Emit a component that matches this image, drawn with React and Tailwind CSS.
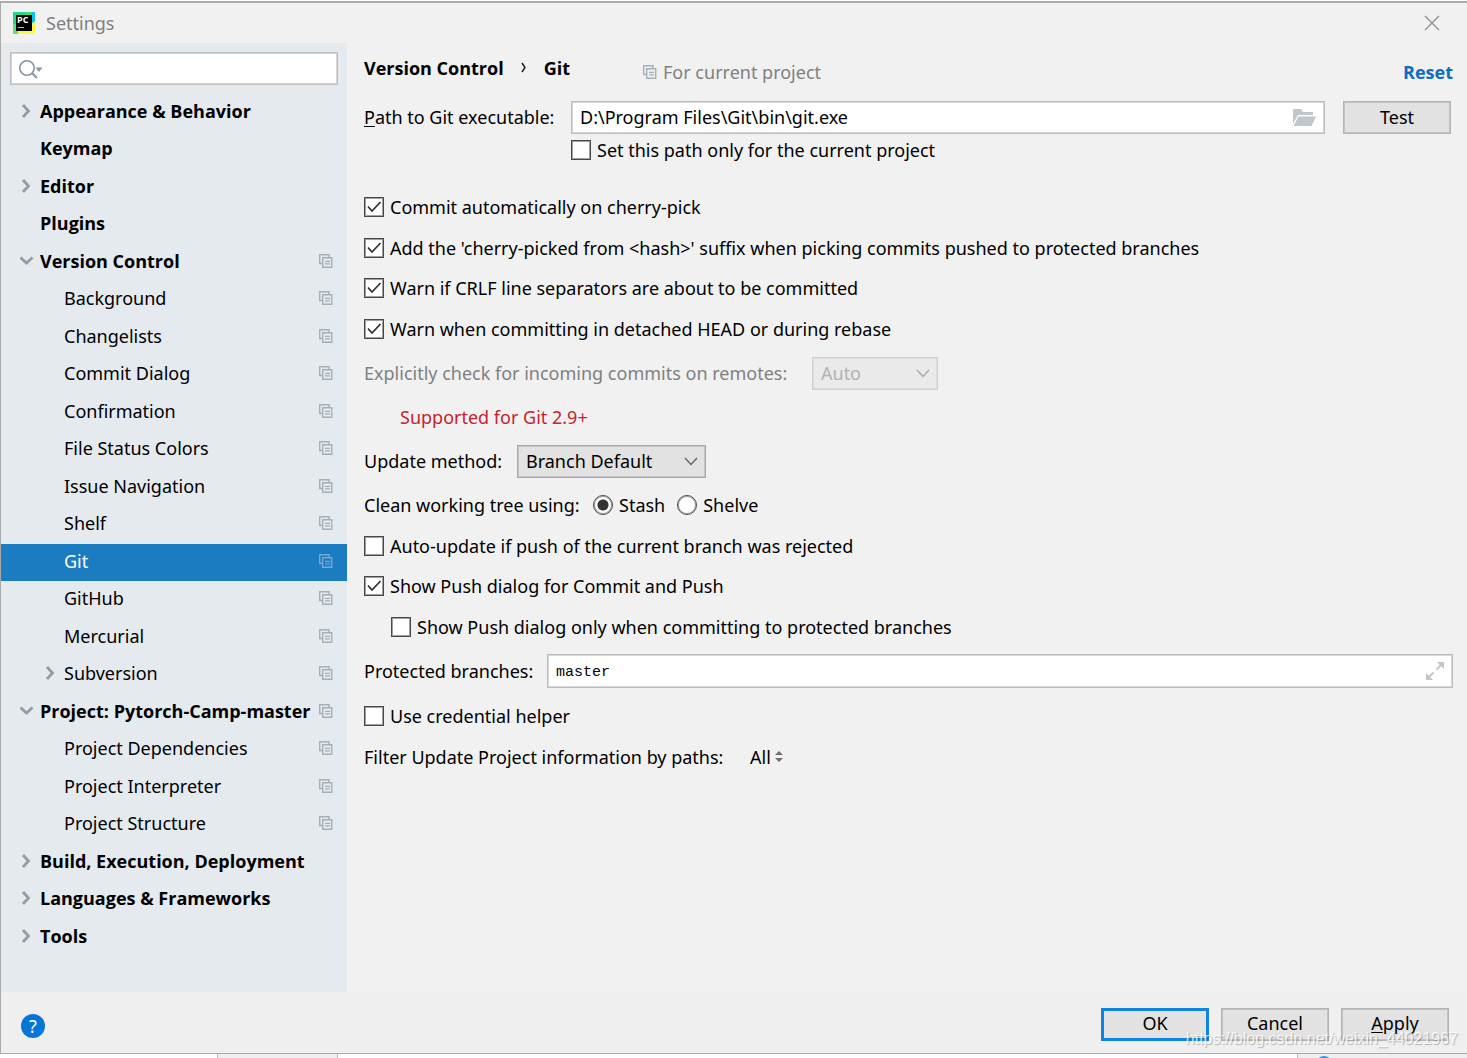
import React from "react";

const tree = [
  { label: "Appearance & Behavior", arrow: "right", top: true },
  { label: "Keymap", top: true },
  { label: "Editor", arrow: "right", top: true },
  { label: "Plugins", top: true },
  { label: "Version Control", arrow: "down", top: true, project: true },
  { label: "Background", project: true },
  { label: "Changelists", project: true },
  { label: "Commit Dialog", project: true },
  { label: "Confirmation", project: true },
  { label: "File Status Colors", project: true },
  { label: "Issue Navigation", project: true },
  { label: "Shelf", project: true },
  { label: "Git", project: true, selected: true },
  { label: "GitHub", project: true },
  { label: "Mercurial", project: true },
  { label: "Subversion", arrow: "right", project: true },
  { label: "Project: Pytorch-Camp-master", arrow: "down", top: true, project: true },
  { label: "Project Dependencies", project: true },
  { label: "Project Interpreter", project: true },
  { label: "Project Structure", project: true },
  { label: "Build, Execution, Deployment", arrow: "right", top: true },
  { label: "Languages & Frameworks", arrow: "right", top: true },
  { label: "Tools", arrow: "right", top: true },
];

function PyCharmLogo() {
  return (
    <svg width="22" height="22" viewBox="0 0 22 22" aria-hidden="true">
      <path d="M0 0h22v22H0z" fill="#21d789" />
      <path d="M17 0h5v12l-5-2z" fill="#07c3f2" />
      <path d="M12 0h7l-2 6h-5z" fill="#3fe06a" />
      <path d="M22 9v13H5l-5-3v-2l14-2z" fill="#fcf84a" />
      <path d="M0 12h5v10H0z" fill="#5be07a" />
      <path d="M3 3h16v16H3z" fill="#000" />
      <text x="4" y="11" fontSize="9" fontWeight="700" fill="#fff" fontFamily="Open Sans, sans-serif">PC</text>
      <path d="M5 15.500h6" stroke="#bbb" />
    </svg>
  );
}

function ProjectIcon({ color = "#a5b0b8" }) {
  return (
    <svg width="14" height="14" viewBox="0 0 14 14" fill="none" stroke={color} className="shrink-0" aria-hidden="true">
      <path d="M3 9.500H.7V.7H10V3" strokeWidth="1.400" />
      <path d="M3.700 3.700h9v9.600h-9z" strokeWidth="1.400" />
      <path d="M6 7.300h5M6 9.900h5" strokeWidth="1.300" />
    </svg>
  );
}

function Arrow({ dir }) {
  return (
    <svg width="14" height="14" viewBox="0 0 14 14" fill="none" stroke="#999c9f" strokeWidth="2.800" aria-hidden="true">
      {dir === "right" ? <path d="M3 1l5.500 6L3 13" /> : <path d="M.5 3.500l6 5.500 6-5.500" />}
    </svg>
  );
}

function TreeItem({ label, arrow, top, project, selected }) {
  return (
    <li className="odd:h-[37px] even:h-[38px]">
      <button
        className={`flex h-full w-full items-center pr-[14px] pb-1 text-left ${
          top ? "pl-[19px] font-['Open_Sans',sans-serif] font-bold" : "pl-[43px]"
        } ${selected ? "bg-[#1b7cc2] text-white" : ""}`}
      >
        <span className="w-5 shrink-0">{arrow && <Arrow dir={arrow} />}</span>
        <span className="flex-1 whitespace-nowrap">{label}</span>
        {project && <ProjectIcon color={selected ? "#7fa6c6" : undefined} />}
      </button>
    </li>
  );
}

function Sidebar() {
  return (
    <aside className="w-[346px] shrink-0 bg-[#e5eaee]">
      <div className="px-[9px] pt-[9px]">
        <label className="flex h-[33px] items-center border border-[#bcbec0] bg-white pl-[7px] shadow-[inset_0_0_0_1px_#d4d6d8]">
          <svg width="26" height="20" viewBox="0 0 26 20" fill="none" stroke="#8b969e" aria-hidden="true">
            <circle cx="9" cy="9" r="7.200" strokeWidth="1.600" />
            <path d="M14 14l5 5" strokeWidth="2.200" />
            <path d="M17.500 8.500h7L21 13z" fill="#8b969e" stroke="none" />
          </svg>
          <input type="text" aria-label="Search settings" className="w-full min-w-0 flex-1 bg-transparent outline-none" />
        </label>
      </div>
      <ul className="pt-[9px]">
        {tree.map((item) => (
          <TreeItem key={item.label} {...item} />
        ))}
      </ul>
    </aside>
  );
}

function Check({ label, checked }) {
  return (
    <label className="flex items-center gap-1.5">
      <span className="relative block h-5 w-5">
        <input
          type="checkbox"
          defaultChecked={checked}
          className="peer block h-5 w-5 appearance-none border border-[#484848] bg-white shadow-[inset_0_0_0_1px_#a0a0a0]"
        />
        <svg
          viewBox="0 0 20 20"
          fill="none"
          stroke="#333"
          strokeWidth="1.800"
          className="pointer-events-none absolute inset-0 hidden peer-checked:block"
          aria-hidden="true"
        >
          <path d="M4 9.500L8 14l8.500-9" />
        </svg>
      </span>
      {label}
    </label>
  );
}

function Radio({ label, checked }) {
  return (
    <label className="flex items-center gap-1.5">
      <input
        type="radio"
        name="clean"
        defaultChecked={checked}
        className="h-5 w-5 appearance-none rounded-full border border-[#484848] bg-white shadow-[inset_0_0_0_1px_#a0a0a0] checked:bg-[radial-gradient(circle,#333_5px,#fff_6px)]"
      />
      {label}
    </label>
  );
}

function Combo({ id, value, disabled, className }) {
  return (
    <span className={`relative block ${disabled ? "text-[#b2b2b2]" : ""} ${className}`}>
      <select
        id={id}
        disabled={disabled}
        className="block h-[33px] w-full appearance-none border border-[#a8a8a8] bg-[#e2e2e2] pl-2 shadow-[inset_0_0_0_1px_#c6c6c6] disabled:border-[#cfcfcf] disabled:bg-[#eaeaea] disabled:opacity-100 disabled:shadow-[inset_0_0_0_1px_#dedede]"
      >
        <option>{value}</option>
      </select>
      <svg
        width="14"
        height="10"
        viewBox="0 0 14 10"
        fill="none"
        stroke={disabled ? "#aaa" : "#666"}
        strokeWidth="1.500"
        className="pointer-events-none absolute top-3 right-2"
        aria-hidden="true"
      >
        <path d="M1 1l6 6.500L13 1" />
      </svg>
    </span>
  );
}

function DialogButton({ children, primary }) {
  return (
    <button
      className={`h-[33px] w-[108px] shrink-0 bg-[#e2e2e2] pb-0.5 ${
        primary ? "border-3 border-[#0e84de]" : "border border-[#b4b4b4] shadow-[inset_0_0_0_1px_#c2c2c2]"
      }`}
    >
      {children}
    </button>
  );
}

function GitSettings() {
  return (
    <main className="min-w-0 flex-1 pr-[14px] pl-[17px]">
      <div className="flex h-[58px] items-center">
        <h1 className="flex items-center pb-2 font-['Open_Sans',sans-serif] font-bold">
          Version Control
          <svg width="8" height="12" viewBox="0 0 8 12" fill="none" stroke="#222" strokeWidth="1.500" className="mx-4" aria-hidden="true">
            <path d="M2 1l3 4.500L2 10" />
          </svg>
          Git
        </h1>
        <span className="ml-[73px] flex items-center gap-1.5 text-[#808080]">
          <ProjectIcon />
          For current project
        </span>
        <a href="#reset" className="ml-auto font-['Open_Sans',sans-serif] font-bold text-[#0a6cc4]">
          Reset
        </a>
      </div>

      <div className="grid grid-cols-[207px_1fr_auto] items-center pr-0.5">
        <label htmlFor="git-path" className="pb-0.5">
          <span className="underline underline-offset-2">P</span>ath to Git executable:
        </label>
        <div className="flex h-[33px] items-center border border-[#bcbcbc] bg-white pr-2 pl-2 shadow-[inset_0_0_0_1px_#d8d8d8]">
          <input
            id="git-path"
            type="text"
            defaultValue="D:\Program Files\Git\bin\git.exe"
            className="min-w-0 flex-1 bg-transparent pb-0.5 outline-none"
          />
          <svg width="24" height="18" viewBox="0 0 24 18" fill="#c0c6ca" aria-hidden="true">
            <path d="M1 0h8l2 3h10v3H6L1 15z" />
            <path d="M6.500 7.500H24L19.500 17H1.500z" />
          </svg>
        </div>
        <div className="pl-[18px]">
          <DialogButton>Test</DialogButton>
        </div>
        <div className="col-start-2 flex h-8 items-center">
          <Check label="Set this path only for the current project" />
        </div>
      </div>

      <ul className="pt-[21px]">
        <li className="flex items-center odd:h-10 even:h-[41px]">
          <Check checked label="Commit automatically on cherry-pick" />
        </li>
        <li className="flex items-center odd:h-10 even:h-[41px]">
          <Check
            checked
            label="Add the 'cherry-picked from <hash>' suffix when picking commits pushed to protected branches"
          />
        </li>
        <li className="flex items-center odd:h-10 even:h-[41px]">
          <Check checked label="Warn if CRLF line separators are about to be committed" />
        </li>
        <li className="flex items-center odd:h-10 even:h-[41px]">
          <Check checked label="Warn when committing in detached HEAD or during rebase" />
        </li>
      </ul>

      <div className="flex h-12 items-center">
        <label htmlFor="incoming" className="w-[448px] text-[#808080]">
          Explicitly check for incoming commits on remotes:
        </label>
        <Combo id="incoming" value="Auto" disabled className="w-[126px]" />
      </div>
      <p className="flex h-10 items-center pl-9 text-[#c7222d]">Supported for Git 2.9+</p>

      <div className="flex h-12 items-center">
        <label htmlFor="update" className="w-[153px]">
          Update method:
        </label>
        <Combo id="update" value="Branch Default" className="w-[189px]" />
      </div>

      <div className="flex h-10 items-center gap-3" role="radiogroup" aria-labelledby="clean-label">
        <span id="clean-label" className="w-[217px]">
          Clean working tree using:
        </span>
        <Radio checked label="Stash" />
        <Radio label="Shelve" />
      </div>

      <ul>
        <li className="flex items-center odd:h-[41px] even:h-10">
          <Check label="Auto-update if push of the current branch was rejected" />
        </li>
        <li className="flex items-center odd:h-[41px] even:h-10">
          <Check checked label="Show Push dialog for Commit and Push" />
        </li>
        <li className="flex items-center pl-[27px] odd:h-[41px] even:h-10">
          <Check label="Show Push dialog only when committing to protected branches" />
        </li>
      </ul>

      <div className="flex h-12 items-center">
        <label htmlFor="branches" className="w-[183px]">
          Protected branches:
        </label>
        <div className="flex h-[34px] min-w-0 flex-1 items-center border border-[#bcbcbc] bg-white pr-[7px] pl-2 shadow-[inset_0_0_0_1px_#d8d8d8]">
          <input
            id="branches"
            type="text"
            defaultValue="master"
            className="min-w-0 flex-1 bg-transparent pt-1 font-['Liberation_Mono',monospace] text-[15px] outline-none"
          />
          <svg width="20" height="20" viewBox="0 0 20 20" fill="#c0c6ca" stroke="#c0c6ca" aria-hidden="true">
            <path d="M12 1h7v7z" stroke="none" />
            <path d="M1 12v7h7z" stroke="none" />
            <path d="M16 4l-4.500 4.500M4 16l4.500-4.500" strokeWidth="1.800" />
          </svg>
        </div>
      </div>

      <div className="flex h-[41px] items-center">
        <Check label="Use credential helper" />
      </div>

      <div className="flex h-[41px] items-center">
        <label htmlFor="paths" className="w-[386px]">
          Filter Update Project information by paths:
        </label>
        <span className="flex items-center gap-1">
          <select id="paths" className="appearance-none bg-transparent">
            <option>All</option>
          </select>
          <svg width="8" height="14" viewBox="0 0 8 14" fill="#6e6e6e" aria-hidden="true">
            <path d="M4 1l4 4H0zM4 12L0 8h8z" />
          </svg>
        </span>
      </div>
    </main>
  );
}

export default function App() {
  return (
    <div className="relative flex min-h-screen flex-col overflow-hidden bg-white pt-px font-['Noto_Sans',sans-serif] text-[18px] leading-6 text-black">
      <div className="flex flex-1 flex-col border-t-2 border-b border-l border-[#a9abab] bg-[#f1f1f1]">
        <header className="flex h-10 items-center pr-[27px] pl-3">
          <PyCharmLogo />
          <span className="ml-[11px] text-[#808080]">Settings</span>
          <button aria-label="Close" className="ml-auto">
            <svg width="16" height="16" viewBox="0 0 16 16" fill="none" stroke="#999" strokeWidth="1.500" aria-hidden="true">
              <path d="M1 1l14 14M15 1L1 15" />
            </svg>
          </button>
        </header>

        <div className="flex flex-1">
          <Sidebar />
          <GitSettings />
        </div>

        <footer className="flex h-[61px] items-center gap-3 bg-[#efefef] pt-[3px] pr-[18px] pl-5">
          <button
            aria-label="Help"
            className="mt-1 mr-auto h-6 w-6 rounded-full bg-[#0675d8] text-[18px] leading-6 text-white"
          >
            ?
          </button>
          <DialogButton primary>OK</DialogButton>
          <DialogButton>Cancel</DialogButton>
          <DialogButton>
            <span className="underline underline-offset-2">A</span>pply
          </DialogButton>
        </footer>
      </div>

      {/* sliver of the window behind the dialog */}
      <div className="flex h-1 overflow-hidden">
        <div className="ml-[217px] w-[121px] border-x border-[#bbb] bg-[#efefef]" />
        <div className="ml-auto w-[170px] border-l border-[#bbb] bg-[#efefef] pt-0.5 pl-[18px]">
          <div className="h-4 w-4 rounded-full bg-[#3a9bd5]" />
        </div>
      </div>

      <span className="pointer-events-none absolute right-[9px] bottom-[7px] font-['Liberation_Sans',sans-serif] text-[16px] text-white/80 [text-shadow:1px_1px_1px_#0004]">
        https://blog.csdn.net/weixin_44021967
      </span>
    </div>
  );
}
